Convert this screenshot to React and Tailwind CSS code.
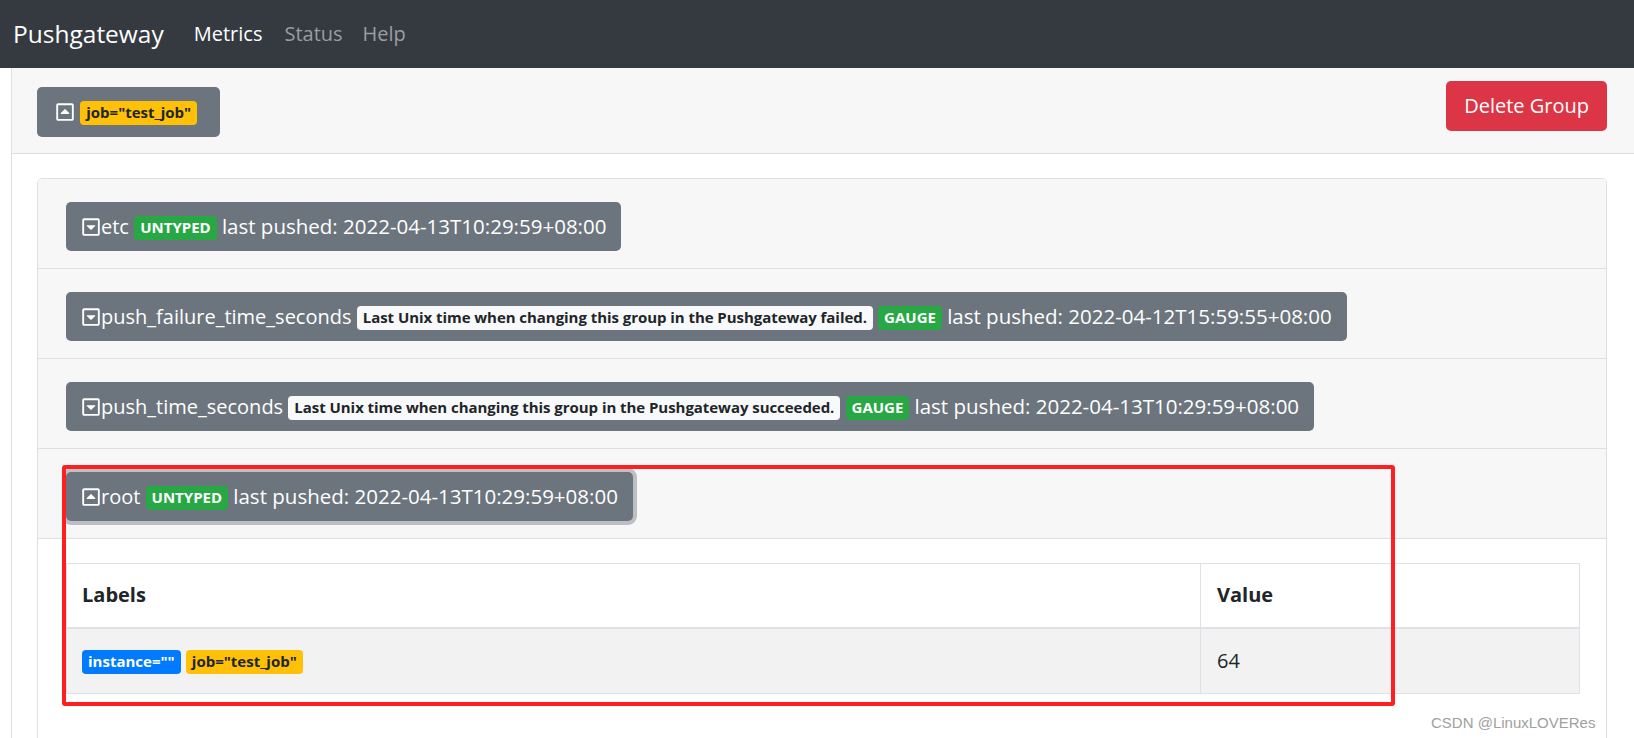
import { FaRegCaretSquareDown, FaRegCaretSquareUp } from "react-icons/fa";

const metrics = [
    {
        name: "etc",
        help: null,
        type: "UNTYPED",
        pushed: "2022-04-13T10:29:59+08:00",
        open: false,
    },
    {
        name: "push_failure_time_seconds",
        help: "Last Unix time when changing this group in the Pushgateway failed.",
        type: "GAUGE",
        pushed: "2022-04-12T15:59:55+08:00",
        open: false,
    },
    {
        name: "push_time_seconds",
        help: "Last Unix time when changing this group in the Pushgateway succeeded.",
        type: "GAUGE",
        pushed: "2022-04-13T10:29:59+08:00",
        open: false,
    },
    {
        name: "root",
        help: null,
        type: "UNTYPED",
        pushed: "2022-04-13T10:29:59+08:00",
        open: true,
    },
];

function Badge({ className, children }) {
    return (
        <span className={`inline-block rounded-[4px] px-[6px] py-[4.5px] text-[15px] font-bold leading-none align-[1px] ${className}`}>
            {children}
        </span>
    );
}

function MetricItem({ metric }) {
    const Icon = metric.open ? FaRegCaretSquareUp : FaRegCaretSquareDown;
    return (
        <div className="border-b border-[#dfdfdf]">
            <div className="bg-[#f7f7f7] pl-[28px] pt-[23px] pb-[17px]">
                <div
                    className={`inline-block h-[49px] rounded-[5px] bg-[#6c757d] px-[15px] py-[9px] text-[20px] leading-[31px] text-white whitespace-nowrap ${
                        metric.open ? "shadow-[0_0_0_4px_rgba(130,138,145,0.5)]" : ""
                    }`}
                >
                    <Icon className="inline align-[-3px] text-[20px]" />
                    {metric.name}{" "}
                    {metric.help && (
                        <>
                            <Badge className="bg-[#f8f9fa] text-[#212529] tracking-[-0.05px]">{metric.help}</Badge>{" "}
                        </>
                    )}
                    <Badge className="bg-[#28a745] text-white">{metric.type}</Badge>{" "}
                    <span className="text-[20.5px]">last pushed: {metric.pushed}</span>
                </div>
            </div>
            {metric.open && (
                <div className="border-t border-[#dfdfdf] bg-white pl-[28px] pr-[26px] pt-[24px] pb-[60px]">
                    <div className="border border-[#dee2e6] text-[20px] text-[#212529]">
                        <div className="grid grid-cols-[1134px_1fr] border-b-2 border-[#dee2e6] bg-white">
                            <div className="h-[63px] border-r border-[#dee2e6] px-[15px] pt-[16px] font-bold">Labels</div>
                            <div className="h-[63px] px-[16px] pt-[16px] font-bold">Value</div>
                        </div>
                        <div className="grid grid-cols-[1134px_1fr] bg-[#f2f2f2]">
                            <div className="h-[64px] border-r border-[#dee2e6] px-[15px] pt-[17px] leading-[30px]">
                                <Badge className="bg-[#007bff] text-white">instance=""</Badge>{" "}
                                <Badge className="bg-[#ffc107] text-[#212529]">job="test_job"</Badge>
                            </div>
                            <div className="h-[64px] px-[16px] pt-[17px] leading-[30px]">64</div>
                        </div>
                    </div>
                </div>
            )}
        </div>
    );
}

export default function App() {
    return (
        <div className="relative h-[738px] w-[1634px] overflow-hidden bg-white font-['Open_Sans',sans-serif]">
            {/* navbar */}
            <nav className="flex h-[68px] items-center bg-[#343a40] pl-[13px]">
                <span className="mr-[19px] text-[24.5px] text-white">Pushgateway</span>
                <span className="px-[11px] text-[20px] text-white">Metrics</span>
                <span className="px-[11px] text-[20px] text-[#9a9da0]">Status</span>
                <span className="pl-[9px] pr-[11px] text-[20px] text-[#9a9da0]">Help</span>
            </nav>

            <div className="pl-[11px]">
                <div className="border-l border-[#dfdfdf]">
                    {/* group header */}
                    <div className="flex h-[86px] items-start justify-between border-b border-[#dfdfdf] bg-[#f7f7f7] pl-[25px] pr-[27px] pt-[13px]">
                        <div className="mt-[6px] inline-block h-[50px] rounded-[5px] bg-[#6c757d] pl-[18px] pr-[23px] py-[10px] text-[20px] leading-[30px] text-white">
                            <FaRegCaretSquareUp className="inline align-[-3px] text-[20px]" />{" "}
                            <Badge className="bg-[#ffc107] text-[#212529]">job="test_job"</Badge>
                        </div>
                        <button className="h-[50px] rounded-[5px] bg-[#dc3545] px-[18px] text-[20px] text-white">
                            Delete Group
                        </button>
                    </div>

                    {/* metrics */}
                    <div className="pl-[25px] pr-[27px] pt-[24px]">
                        <div className="overflow-hidden rounded-[5px] border border-[#dfdfdf]">
                            {metrics.map((m) => (
                                <MetricItem key={m.name} metric={m} />
                            ))}
                        </div>
                    </div>
                </div>
            </div>

            {/* annotation box drawn over the screenshot */}
            <div className="pointer-events-none absolute left-[62px] top-[465px] h-[241px] w-[1333px] rounded-[3px] border-[4px] border-[#ff1f1f]" />
            <span className="absolute left-[1431px] top-[712px] text-[15px] text-[#a0a0a0] font-['Liberation_Sans',sans-serif]">
                CSDN @LinuxLOVERes
            </span>
        </div>
    );
}
